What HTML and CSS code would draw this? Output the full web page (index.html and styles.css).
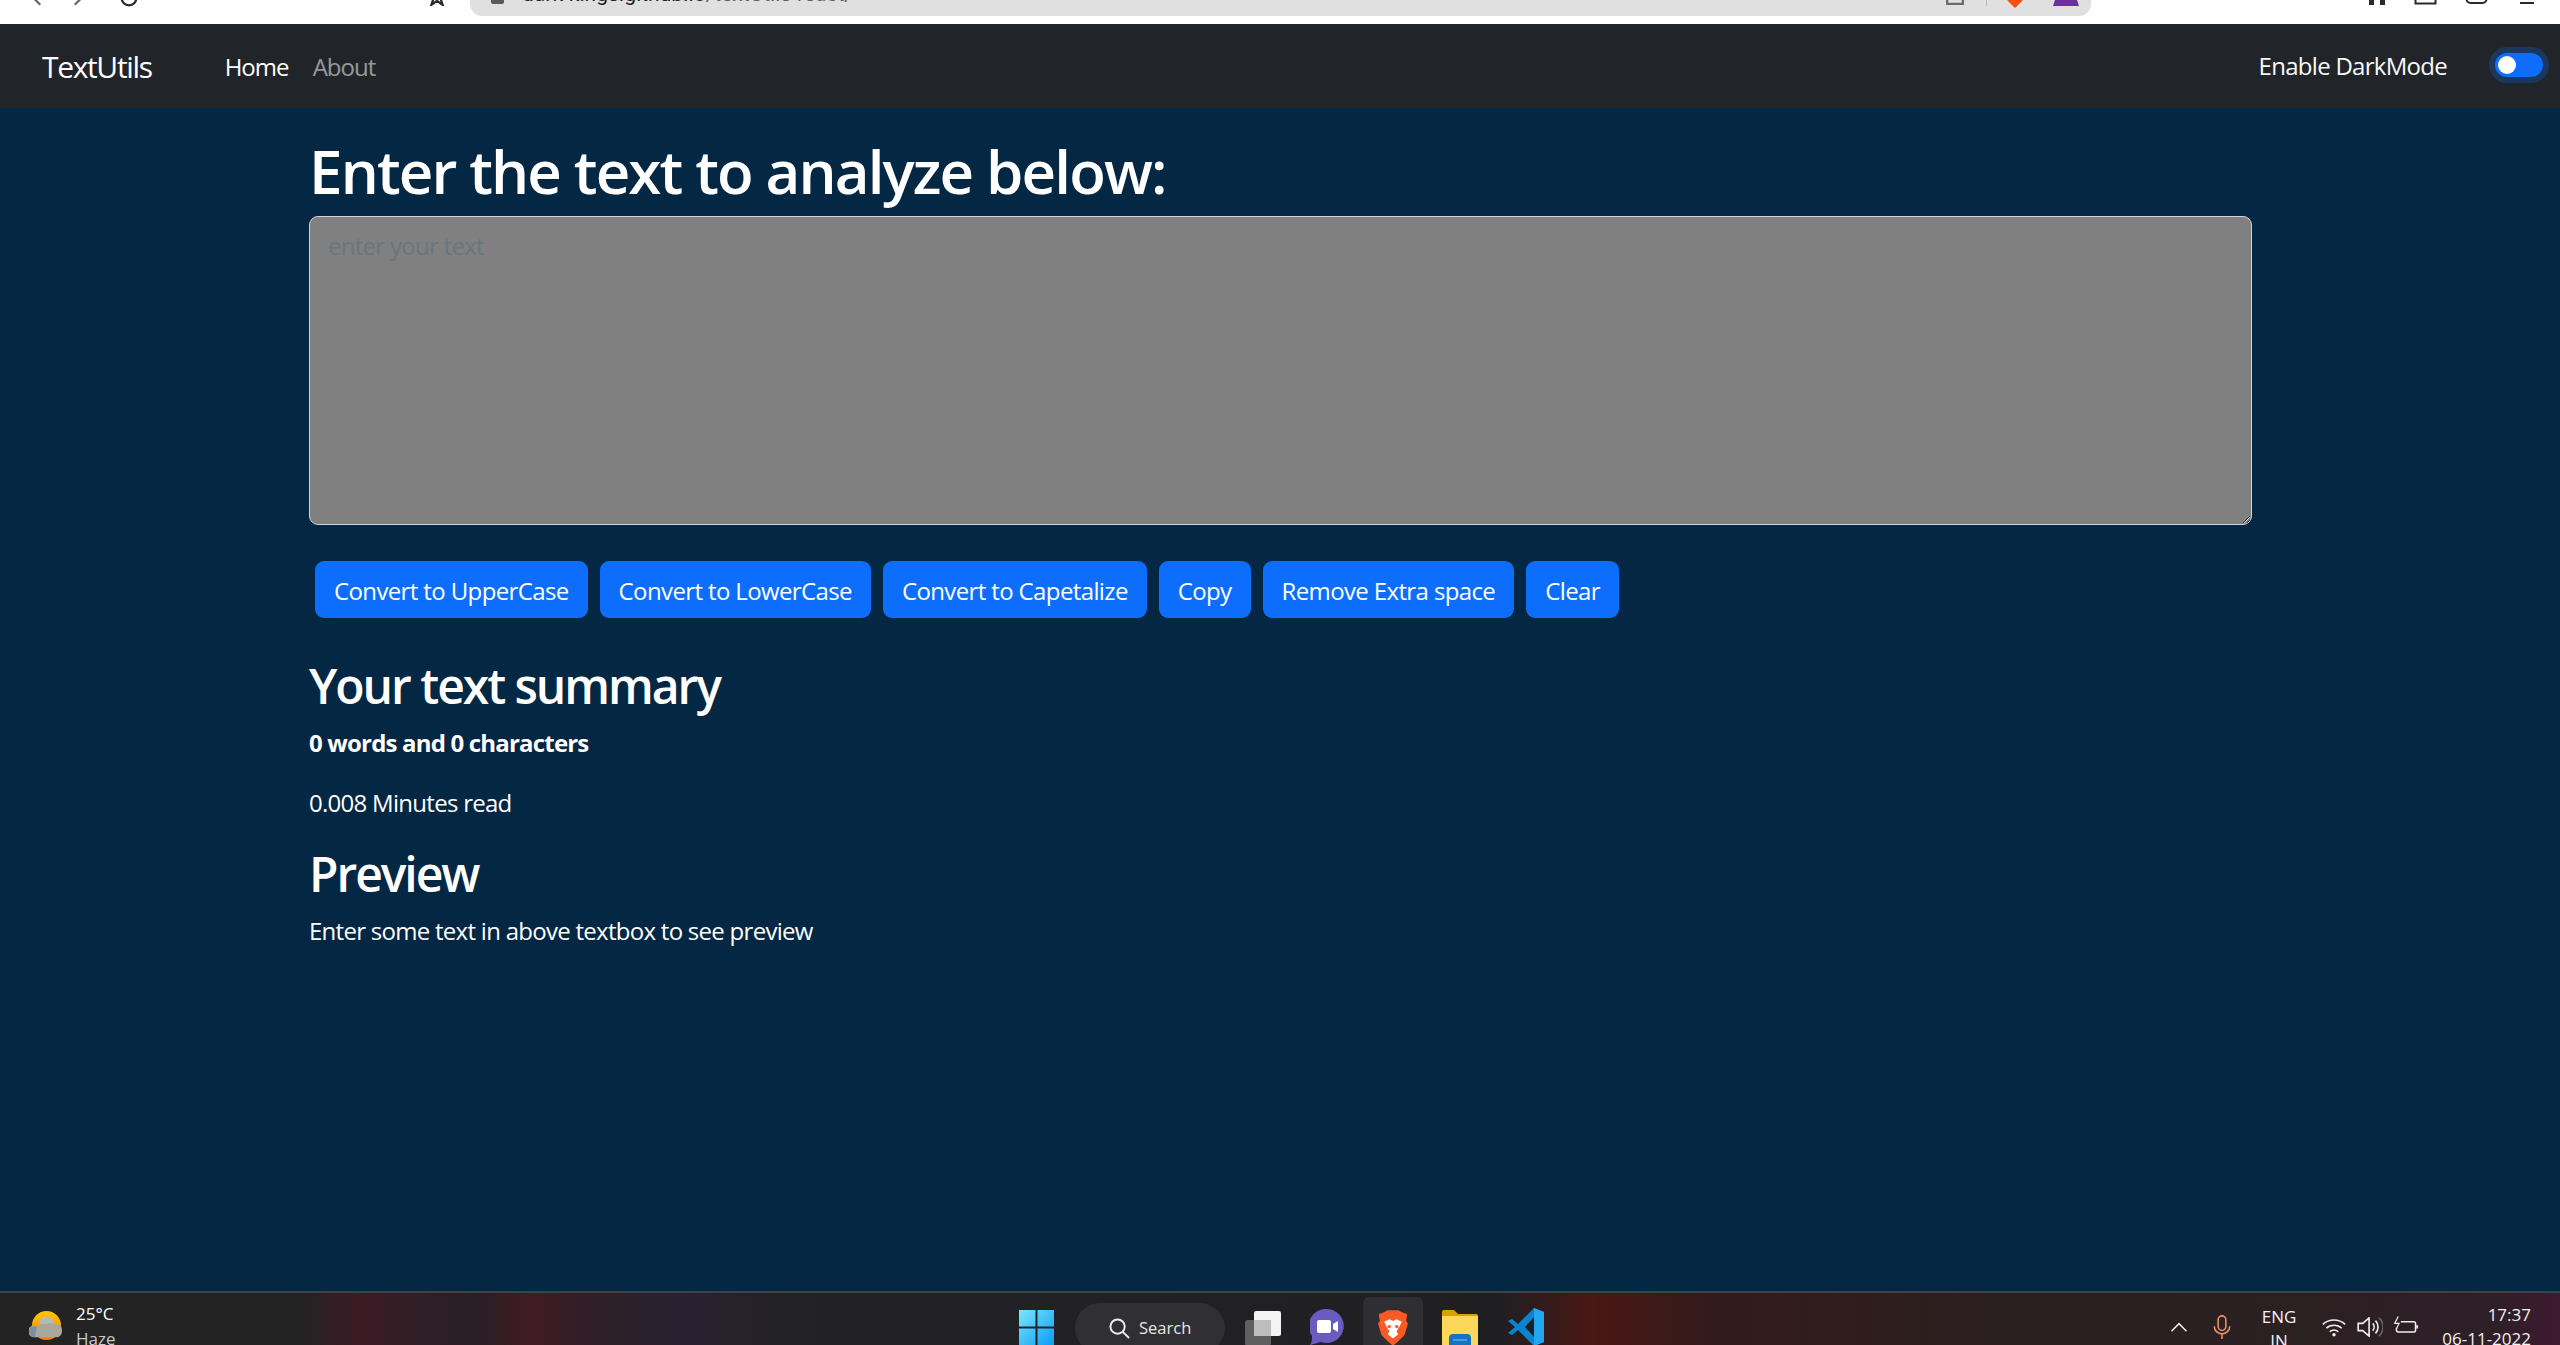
FILE: index.html
```html
<!DOCTYPE html>
<html lang="en">
<head>
<meta charset="utf-8">
<title>TextUtils</title>
<link rel="stylesheet" href="styles.css">
</head>
<body>
<div class="page">
  <header class="chrome">
    <div class="chrome-nav">
      <svg class="ci" viewBox="0 0 16 16"><path d="M10 2 4 8l6 6" class="st-gray"/></svg>
      <svg class="ci" viewBox="0 0 16 16"><path d="m6 2 6 6-6 6" class="st-gray"/></svg>
      <svg class="ci ci-reload" viewBox="0 0 16 16"><circle cx="8" cy="8" r="6.500" class="st-dark"/></svg>
    </div>
    <svg class="ci ci-star" viewBox="0 0 16 16"><path d="M8 1l2 5h5l-4 3 2 6-5-3.500L3 15l2-6-4-3h5z" class="st-dark"/></svg>
    <div class="omnibox">
      <span class="lock"></span>
      <span class="url"><b>dark-kings.github.io</b>/textUtils-react/</span>
      <svg class="ci ci-share" viewBox="0 0 16 16"><path d="M1 1v14h14V1" class="st-gray"/></svg>
      <span class="omni-sep"></span>
      <svg class="ci ci-shield" viewBox="0 0 18 18"><path d="M0 0h18v7c0 3-5 7-9 11C5 14 0 10 0 7z" class="fill-orange"/><path d="M6 2h6v4l-3 3-3-3z" class="fill-white"/></svg>
      <svg class="ci ci-tri" viewBox="0 0 26 18"><path d="M8-6h10l8 24H0z" class="fill-purple"/><path d="M6 10 10-6h6l4 16z" class="fill-white"/><path d="M4 11 9-6H5z" class="fill-orange"/></svg>
    </div>
    <div class="chrome-right">
      <svg class="ci" viewBox="0 0 18 18"><path d="M1 0h16v18h-5v-5H6v5H1z" class="fill-dark"/></svg>
      <svg class="ci ci-wide" viewBox="0 0 23 18"><rect x="1.500" y="-6" width="20" height="22.500" class="st-dark"/></svg>
      <svg class="ci ci-wide" viewBox="0 0 23 18"><path d="M1.500-6v18a4 4 0 0 0 4 4h12a4 4 0 0 0 4-4V-6M12 10h10" class="st-dark"/></svg>
      <svg class="ci ci-min" viewBox="0 0 14 18"><path d="M0 16h14" class="st-dark"/></svg>
    </div>
  </header>

  <nav class="navbar">
    <a class="brand">TextUtils</a>
    <a class="nav-link nav-active">Home</a>
    <a class="nav-link">About</a>
    <label class="mode">Enable DarkMode</label>
    <span class="switch"><span class="knob"></span></span>
  </nav>

  <main class="main">
    <section class="container">
      <h1 class="title">Enter the text to analyze below:</h1>
      <textarea class="box" rows="8" placeholder="enter your text"></textarea>
      <div class="actions">
        <button class="btn">Convert to UpperCase</button>
        <button class="btn">Convert to LowerCase</button>
        <button class="btn">Convert to Capetalize</button>
        <button class="btn">Copy</button>
        <button class="btn">Remove Extra space</button>
        <button class="btn">Clear</button>
      </div>
    </section>
    <section class="container summary">
      <h2 class="sub">Your text summary</h2>
      <p class="para"><b>0 words and 0 characters</b></p>
      <p class="para">0.008 Minutes read</p>
      <h2 class="sub">Preview</h2>
      <p class="para">Enter some text in above textbox to see preview</p>
    </section>
  </main>

  <footer class="taskbar">
    <div class="weather">
      <svg class="w-icon" viewBox="0 0 36 32">
        <defs><linearGradient id="sun" x1="0" y1="0" x2="0" y2="1"><stop offset="0" stop-color="#ffc800"/><stop offset="1" stop-color="#f77f00"/></linearGradient></defs>
        <circle cx="18" cy="15" r="15" fill="url(#sun)"/>
        <circle cx="18" cy="13" r="7.500" fill="#b7bcae"/>
        <path d="M5 27a6 6 0 0 1 0-12c2 0 3 1 4 1 2-3 6-4 9-2 2-2 6-2 8 0 3-2 8 0 8 6s-4 7-6 7z" fill="#a9a99b"/>
        <path d="M0 22c0-5 4-7 8-6l-2 11c-3 0-6-2-6-5z" fill="#7c8ea3"/>
      </svg>
      <div class="w-text"><span class="w-temp">25°C</span><span class="w-desc">Haze</span></div>
    </div>
    <div class="tb-center">
      <svg class="t-win" viewBox="0 0 35 35">
        <defs><linearGradient id="win" x1="0" y1="0" x2="1" y2="1"><stop offset="0" stop-color="#79e7ff"/><stop offset="1" stop-color="#0b9cf5"/></linearGradient></defs>
        <path d="M0 0h16.500v16.500H0zM18.500 0H35v16.500H18.500zM0 18.500h16.500V35H0zM18.500 18.500H35V35H18.500z" fill="url(#win)"/>
      </svg>
      <div class="t-search">
        <svg class="s-glass" viewBox="0 0 22 22"><circle cx="9" cy="9" r="7.500"/><path d="m14.500 14.500 6.500 6.500"/></svg>
        <span>Search</span>
      </div>
      <svg class="t-tasks" viewBox="0 0 36 36">
        <rect x="0" y="10" width="26" height="26" rx="3" fill="#5f5f5f"/>
        <rect x="9" y="1" width="27" height="25" rx="2" fill="#f3f3f3"/>
        <rect x="9" y="10" width="17" height="16" fill="#bdbdbd"/>
      </svg>
      <svg class="t-chat" viewBox="0 0 34 38">
        <path d="M17 0a17 17 0 1 1-6 33L0 36c2-3 2-6 2-9A17 17 0 0 1 17 0z" fill="#6a5bc0"/>
        <rect x="7" y="11" width="14" height="13" rx="2" fill="#fff"/><path d="m23 15 5-3v11l-5-3z" fill="#fff"/>
      </svg>
      <div class="t-active">
        <svg class="t-brave" viewBox="0 0 34 40">
          <path d="M5 3 11 0h12l6 3 4 1-1 8 2 3-4 13-7 7-6 5-6-5-7-7L0 15l2-3-1-8z" fill="#fb5a24"/>
          <path d="M7 13l6-3 4 2 4-2 6 3-3 6-3 5 2 3-6 5-6-5 2-3-3-5z" fill="#fff"/>
          <path d="M11 17h4l-1 3h-3zM19 17h4l0 3h-3z" fill="#fb5a24"/>
        </svg>
      </div>
      <svg class="t-files" viewBox="0 0 36 38">
        <path d="M0 3a2 2 0 0 1 2-2h10l4 4h18a2 2 0 0 1 2 2v10H0z" fill="#d9a100"/>
        <path d="M0 7h36v31H0z" fill="#fdd75a"/>
        <path d="M7 38v-9a4 4 0 0 1 4-4h14a4 4 0 0 1 4 4v9z" fill="#1773c2"/>
        <path d="M11 30h14v2H11z" fill="#3fa0e8"/>
      </svg>
      <svg class="t-code" viewBox="0 0 36 38">
        <path d="M26 0 36 4v30l-10 4L10 22l-6 5-4-2 7-6-7-6 4-2 6 5z" fill="#0a84d0"/>
        <path d="M26 0 36 4v30l-10 4z" fill="#22a7ee"/>
        <path d="m26 9-9 10 9 10z" fill="#1e1e1e"/>
      </svg>
    </div>
    <div class="tray">
      <svg class="y-chev" viewBox="0 0 20 12"><path d="m1 11 9-9 9 9"/></svg>
      <svg class="y-mic" viewBox="0 0 20 28"><rect x="5.500" y="1" width="9" height="17" rx="4.500"/><path d="M1 13a9 9 0 0 0 18 0M10 22v6"/></svg>
      <div class="y-lang"><span>ENG</span><span>IN</span></div>
      <svg class="y-wifi" viewBox="0 0 28 22"><path d="M1 8a19 19 0 0 1 26 0M5 12.500a13 13 0 0 1 18 0M9 16.500a7 7 0 0 1 10 0"/><circle cx="14" cy="20" r="2" class="y-fill"/></svg>
      <svg class="y-vol" viewBox="0 0 28 22"><path d="M1 7h5l7-6v20l-7-6H1zM17 7a6 6 0 0 1 0 8M20 4a10 10 0 0 1 0 14"/><path class="y-dim" d="M24 1a14 14 0 0 1 0 20"/></svg>
      <svg class="y-bat" viewBox="0 0 30 24"><path d="M9 7h15a2 2 0 0 1 2 2v8a2 2 0 0 1-2 2H6a2 2 0 0 1-2-2v-3M28 11v4"/><path d="M6 1 2 9h5l-3 6" class="y-thin"/></svg>
      <div class="y-clock"><span>17:37</span><span>06-11-2022</span></div>
    </div>
  </footer>
</div>
</body>
</html>
```

FILE: styles.css
```css
* { box-sizing: border-box; }
html, body { margin: 0; height: 100%; }
body {
  font-family: "Open Sans", "Noto Sans", sans-serif;
  font-size: 24px;
  line-height: 36px;
  color: #fff;
  letter-spacing: -0.03em;
  overflow: hidden;
}
.page { height: 1345px; display: flex; flex-direction: column; overflow: hidden; background: #042743; }

/* browser strip, cropped at the top of the picture */
.chrome { height: 24px; flex: none; background: #fff; display: flex; align-items: flex-end; overflow: hidden; }
.ci { width: 18px; height: 18px; flex: none; display: block; }
.st-gray { fill: none; stroke: #6b6b6b; stroke-width: 2; }
.st-dark { fill: none; stroke: #2a2a2a; stroke-width: 2; }
.fill-dark { fill: #2a2a2a; }
.fill-orange { fill: #f4500e; }
.fill-purple { fill: #6a2fa0; }
.fill-white { fill: #f3f3f3; }
.chrome-nav { display: flex; gap: 21px; margin: 0 0 17px 29px; }
.ci-reload { margin-left: 13px; }
.ci-star { margin: 0 0 18px 290px; }
.omnibox {
  width: 1621px; height: 40px; margin: 0 0 8px 24px; flex: none; background: #e0e0e0;
  border-radius: 0 0 12px 12px; display: flex; align-items: flex-end; padding-left: 21px; overflow: hidden;
}
.lock { width: 13px; height: 16px; background: #5a5a5a; margin: 0 18px 12px 0; flex: none; border-radius: 2px; }
.url { flex: 1; white-space: nowrap; font-family: "Roboto", sans-serif; font-size: 21px; line-height: 24px; letter-spacing: 0; color: #5f5f5f; margin-bottom: 10px; }
.url b { font-weight: 400; color: #202020; }
.ci-share { margin-bottom: 11px; }
.omni-sep { width: 1px; height: 30px; background: #bbb; margin: 0 0 10px 22px; flex: none; }
.ci-shield { margin: 0 0 8px 19px; }
.ci-tri { width: 26px; margin: 0 12px 10px 29px; }
.chrome-right { display: flex; gap: 28px; margin: 0 0 19px 277px; align-items: flex-end; }
.ci-wide { width: 23px; }
.ci-min { width: 14px; margin-left: 4px; }

/* navbar */
.navbar { height: 84px; flex: none; background: #212529; display: flex; align-items: center; padding: 0 17px 0 42px; }
.brand { font-size: 30px; line-height: 45px; margin-right: 73px; letter-spacing: -0.045em; }
.nav-link { color: rgba(255,255,255,.55); margin: 1px 24px 0 0; letter-spacing: -0.04em; }
.nav-active { color: #fff; }
.mode { margin: -1px 0 0 auto; color: #f8f9fa; }
.switch { width: 48px; height: 24px; margin: -2px 0 0 48px; border-radius: 12px; background: #0d6efd; box-shadow: 0 0 0 6px rgba(13,110,253,.25); display: flex; align-items: center; padding-left: 3px; }
.knob { width: 18px; height: 18px; border-radius: 50%; background: #fff; }

/* content */
.main { flex: 1; min-height: 0; }
.container { width: 1943px; margin: 0 0 0 309px; }
.title { font-size: 60px; line-height: 72px; font-weight: 600; margin: 27px 0 9px; letter-spacing: -0.031em; }
.box {
  display: block; width: 100%; height: 309px; padding: 11px 18px; background: #808080; color: #212529;
  border: 1.500px solid #ced4da; border-radius: 9px; font: inherit; letter-spacing: inherit; outline: 0; margin: 0;
}
.box::placeholder { color: #6c757d; opacity: 1; }
.actions { display: flex; gap: 12px; margin: 36px 0 0 6px; }
.btn {
  height: 57px; padding: 2px 19px 0; background: #0d6efd; color: #fff; border: 0; border-radius: 9px;
  font: inherit; letter-spacing: -0.026em; white-space: nowrap;
}
.summary { margin-top: 39px; }
.sub { font-size: 48px; line-height: 58px; font-weight: 600; margin: 2px 0 10px; letter-spacing: -0.0425em; }
.para { margin: 0 0 24px; }
.para b { font-weight: 700; letter-spacing: -0.034em; }

/* taskbar, cropped at the bottom of the picture */
.taskbar {
  height: 54px; flex: none; overflow: hidden; display: flex; align-items: flex-start;
  border-top: 2px solid #3c4348;
  background: linear-gradient(90deg, #232323 0, #232323 300px, #3e1a25 360px, #2c2026 430px, #2a1f25 480px, #421a22 530px, #2d2028 600px, #2a2030 680px, #232327 780px, #1f1f22 1500px, #4a1714 1590px, #351b1b 1700px, #2b2020 2000px, #2b2022 2300px, #2e1f28 2500px, #401830 2560px);
}
.weather { display: flex; width: 1019px; padding: 8px 0 0 29px; flex: none; }
.w-icon { width: 35px; height: 31px; flex: none; margin-top: 10px; }
.w-text { display: flex; flex-direction: column; margin-left: 12px; font-size: 17px; line-height: 25px; letter-spacing: 0; }
.w-desc { color: #c8c8c8; }
.tb-center { display: flex; align-items: flex-start; flex: none; width: 531px; }
.t-win { width: 35px; height: 35px; margin-top: 17px; flex: none; }
.t-search { width: 150px; height: 50px; margin: 10px 0 0 21px; border-radius: 25px; background: #303034; display: flex; align-items: center; padding-left: 34px; font-size: 16.500px; line-height: 24px; letter-spacing: 0; color: #e6e6e6; flex: none; }
.s-glass { width: 21px; height: 21px; fill: none; stroke: #eee; stroke-width: 2; margin-right: 9px; }
.t-tasks { width: 36px; height: 36px; margin: 17px 0 0 20px; flex: none; }
.t-chat { width: 34px; height: 38px; margin: 16px 0 0 29px; flex: none; }
.t-active { width: 60px; height: 60px; margin: 4px 0 0 19px; background: #2f2f33; border-radius: 6px; display: flex; justify-content: center; padding-top: 12px; flex: none; }
.t-brave { width: 30px; height: 38px; }
.t-files { width: 36px; height: 38px; margin: 16px 0 0 19px; flex: none; }
.t-code { width: 36px; height: 38px; margin: 15px 0 0 30px; flex: none; }
.tray { display: flex; align-items: flex-start; margin-left: 620px; flex: none; color: #f2f2f2; letter-spacing: 0; }
.tray svg { fill: none; stroke: #efefef; stroke-width: 1.800; flex: none; }
.y-chev { width: 18px; height: 10px; margin-top: 29px; }
.tray .y-mic { width: 18px; height: 24px; margin: 22px 0 0 25px; stroke: #ee9468; }
.y-lang { display: flex; flex-direction: column; align-items: center; margin: 12px 0 0 30px; font-size: 17px; line-height: 24px; width: 36px; }
.y-wifi { width: 24px; height: 20px; margin: 24px 0 0 25px; }
.tray .y-fill { fill: #efefef; stroke: none; }
.y-vol { width: 26px; height: 20px; margin: 24px 0 0 11px; }
.tray .y-dim { stroke: #666; }
.y-bat { width: 26px; height: 22px; margin: 22px 0 0 10px; }
.tray .y-thin { stroke-width: 1.400; }
.y-clock { display: flex; flex-direction: column; align-items: flex-end; width: 96px; margin: 10px 0 0 16px; font-size: 17px; line-height: 24px; }
```
